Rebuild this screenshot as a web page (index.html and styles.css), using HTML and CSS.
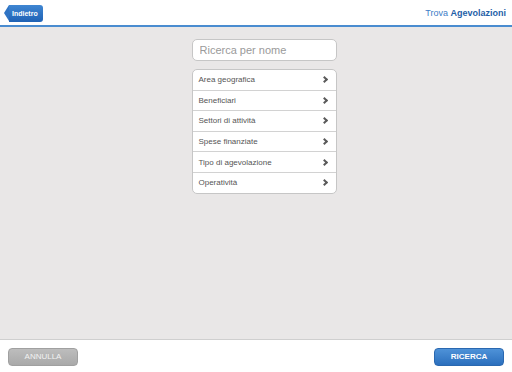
FILE: index.html
```html
<!DOCTYPE html>
<html lang="it">
<head>
    <meta charset="UTF-8">
    <meta name="viewport" content="width=device-width, initial-scale=1.0">
    <title>Trova Agevolazioni</title>
    <link rel="stylesheet" href="styles.css">
</head>
<body>
    <div class="app">
        <header class="topbar">
            <a class="back-btn" href="#">Indietro</a>
            <div class="title">Trova <b>Agevolazioni</b></div>
        </header>

        <main class="content">
            <div class="panel">
                <input class="search" type="text" placeholder="Ricerca per nome">

                <ul class="filters">
                    <li>Area geografica<span class="chev"></span></li>
                    <li>Beneficiari<span class="chev"></span></li>
                    <li>Settori di attività<span class="chev"></span></li>
                    <li>Spese finanziate<span class="chev"></span></li>
                    <li>Tipo di agevolazione<span class="chev"></span></li>
                    <li>Operatività<span class="chev"></span></li>
                </ul>
            </div>
        </main>

        <footer class="bottombar">
            <button class="btn btn-cancel">ANNULLA</button>
            <button class="btn btn-search">RICERCA</button>
        </footer>
    </div>
</body>
</html>
```

FILE: styles.css
```css
html, body {
    margin: 0;
    padding: 0;
    height: 100%;
}
body {
    font-family: "Liberation Sans", Arial, sans-serif;
    background-color: #e9e7e7;
}
.app {
    display: flex;
    flex-direction: column;
    height: 100vh;
}
.topbar {
    height: 25px;
    background-color: #fff;
    border-bottom: 2px solid #4a8cd0;
    display: flex;
    align-items: center;
    justify-content: space-between;
    padding: 0 6px 0 4px;
    flex-shrink: 0;
}
.back-btn {
    position: relative;
    margin-left: 5px;
    height: 17px;
    line-height: 17px;
    padding: 0 5px 0 3px;
    background: linear-gradient(#3f86d2, #1f62b5);
    color: #fff;
    font-size: 7px;
    font-weight: bold;
    text-decoration: none;
    border-radius: 0 3px 3px 0;
    margin-top: 1px;
}
.back-btn::before {
    content: "";
    position: absolute;
    left: -5px;
    top: 0;
    width: 0;
    height: 0;
    border-top: 8.5px solid transparent;
    border-bottom: 8.5px solid transparent;
    border-right: 5px solid #2f74c4;
}
.title {
    font-size: 9px;
    color: #3b7cc6;
    margin-top: 1px;
}
.title b {
    color: #1f5fa8;
}
.content {
    flex: 1;
    display: flex;
    justify-content: center;
    padding-top: 12px;
}
.panel {
    width: 145px;
    margin-left: 16px;
}
.search {
    display: block;
    width: 100%;
    height: 22px;
    box-sizing: border-box;
    border: 1px solid #c6c6c6;
    border-radius: 5px;
    padding: 0 7px;
    font-family: inherit;
    font-size: 11px;
    color: #333;
    background: #fff;
}
.search::placeholder {
    color: #9a9a9a;
}
.filters {
    list-style: none;
    margin: 8px 0 0;
    padding: 0;
    background: #fff;
    border: 1px solid #c6c6c6;
    border-radius: 5px;
}
.filters li {
    height: 19.6px;
    display: flex;
    align-items: center;
    justify-content: space-between;
    padding: 0 7px 0 6px;
    font-size: 8px;
    color: #555;
    border-bottom: 1px solid #d2d2d2;
}
.filters li:last-child {
    border-bottom: none;
}
.chev {
    width: 3px;
    height: 3px;
    border-top: 2px solid #5a5a5a;
    border-right: 2px solid #5a5a5a;
    transform: rotate(45deg);
    margin-right: 2px;
}
.bottombar {
    height: 32px;
    background: #fff;
    border-top: 1px solid #cfcfcf;
    display: flex;
    align-items: center;
    justify-content: space-between;
    padding: 0 8px;
    flex-shrink: 0;
}
.btn {
    width: 70px;
    height: 18px;
    border-radius: 4px;
    font-family: inherit;
    font-size: 8px;
    padding: 0;
    margin-top: 1px;
}
.btn-cancel {
    background: linear-gradient(#bdbdbd, #a9a9a9);
    border: 1px solid #a0a0a0;
    color: #f2f2f2;
}
.btn-search {
    background: linear-gradient(#4e92d8, #2b6fbd);
    border: 1px solid #2a68b0;
    color: #fff;
    font-weight: bold;
}
```
